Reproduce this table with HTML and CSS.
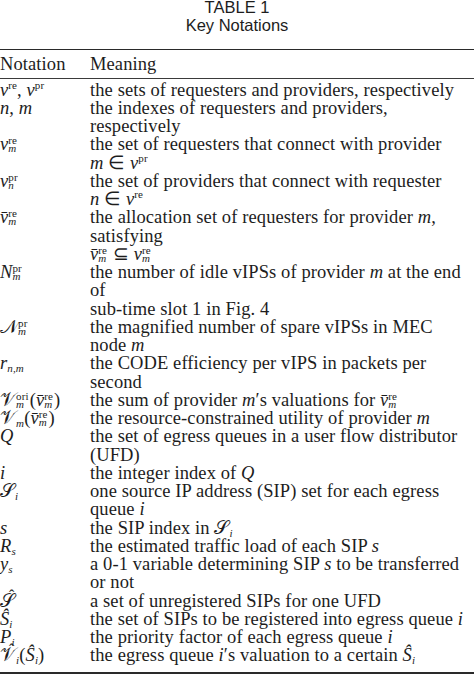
FILE: index.html
```html
<!DOCTYPE html>
<html>
<head>
<meta charset="utf-8">
<link rel="stylesheet" href="styles.css">
</head>
<body>
<div class="caption">
  <div>TABLE 1</div>
  <div>Key Notations</div>
</div>
<table class="notations">
  <thead>
    <tr><th class="cn">Notation</th><th class="cm">Meaning</th></tr>
  </thead>
  <tbody>
    <tr class="first"><td class="cn"><i>v</i><sup>re</sup>, <i>v</i><sup>pr</sup></td><td class="cm">the sets of requesters and providers, respectively</td></tr>
    <tr><td class="cn"><i>n</i>, <i>m</i></td><td class="cm">the indexes of requesters and providers,<br>respectively</td></tr>
    <tr><td class="cn"><i>v</i><span class="ss"><span>re</span><i>m</i></span></td><td class="cm">the set of requesters that connect with provider<br><i>m</i> ∈ <i>v</i><sup>pr</sup></td></tr>
    <tr><td class="cn"><i>v</i><span class="ss"><span>pr</span><i>n</i></span></td><td class="cm">the set of providers that connect with requester<br><i>n</i> ∈ <i>v</i><sup>re</sup></td></tr>
    <tr><td class="cn"><i>v̄</i><span class="ss"><span>re</span><i>m</i></span></td><td class="cm">the allocation set of requesters for provider <i>m</i>,<br>satisfying<br><i>v̄</i><span class="ss"><span>re</span><i>m</i></span> ⊆ <i>v</i><span class="ss"><span>re</span><i>m</i></span></td></tr>
    <tr><td class="cn"><i>N</i><span class="ss"><span>pr</span><i>m</i></span></td><td class="cm">the number of idle vIPSs of provider <i>m</i> at the end<br>of<br>sub-time slot 1 in Fig. 4</td></tr>
    <tr><td class="cn"><span class="cal">𝒩</span><span class="ss"><span>pr</span><i>m</i></span></td><td class="cm">the magnified number of spare vIPSs in MEC<br>node <i>m</i></td></tr>
    <tr><td class="cn"><i>r</i><sub><i>n</i>,<i>m</i></sub></td><td class="cm">the CODE efficiency per vIPS in packets per<br>second</td></tr>
    <tr><td class="cn"><span class="cal">𝒱</span><span class="ss"><span>ori</span><i>m</i></span>(<i>v̄</i><span class="ss"><span>re</span><i>m</i></span>)</td><td class="cm">the sum of provider <i>m</i>′s valuations for <i>v̄</i><span class="ss"><span>re</span><i>m</i></span></td></tr>
    <tr><td class="cn"><span class="cal">𝒱</span><sub><i>m</i></sub>(<i>v̄</i><span class="ss"><span>re</span><i>m</i></span>)</td><td class="cm">the resource-constrained utility of provider <i>m</i></td></tr>
    <tr><td class="cn"><i>Q</i></td><td class="cm">the set of egress queues in a user flow distributor<br>(UFD)</td></tr>
    <tr><td class="cn"><i>i</i></td><td class="cm">the integer index of <i>Q</i></td></tr>
    <tr><td class="cn"><span class="cal">𝒮</span><sub><i>i</i></sub></td><td class="cm">one source IP address (SIP) set for each egress<br>queue <i>i</i></td></tr>
    <tr><td class="cn"><i>s</i></td><td class="cm">the SIP index in <span class="cal">𝒮</span><sub><i>i</i></sub></td></tr>
    <tr><td class="cn"><i>R</i><sub><i>s</i></sub></td><td class="cm">the estimated traffic load of each SIP <i>s</i></td></tr>
    <tr><td class="cn"><i>y</i><sub><i>s</i></sub></td><td class="cm">a 0-1 variable determining SIP <i>s</i> to be transferred<br>or not</td></tr>
    <tr><td class="cn"><span class="cal hat">𝒮</span></td><td class="cm">a set of unregistered SIPs for one UFD</td></tr>
    <tr><td class="cn"><i>Ŝ</i><sub><i>i</i></sub></td><td class="cm">the set of SIPs to be registered into egress queue <i>i</i></td></tr>
    <tr><td class="cn"><i>P</i><sub><i>i</i></sub></td><td class="cm">the priority factor of each egress queue <i>i</i></td></tr>
    <tr class="last"><td class="cn"><span class="cal hat">𝒱</span><sub><i>i</i></sub>(<i>Ŝ</i><sub><i>i</i></sub>)</td><td class="cm">the egress queue <i>i</i>′s valuation to a certain <i>Ŝ</i><sub><i>i</i></sub></td></tr>
  </tbody>
</table>
</body>
</html>
```
FILE: styles.css
```css
html, body {
  margin: 0;
  padding: 0;
  background: #ffffff;
  color: #1d1d1d;
}

.caption {
  font-family: "Liberation Sans", Arial, sans-serif;
  font-size: 16.5px;
  line-height: 18.2px;
  text-align: center;
  margin-top: -2px;
}

.notations {
  width: 474px;
  margin-top: 15px;
  border-collapse: collapse;
  font-family: "Liberation Serif", "Times New Roman", serif;
  font-size: 18.5px;
  line-height: 18.25px;
  letter-spacing: 0.1px;
  border-top: 1.5px solid #2a2a2a;
  border-bottom: 2px solid #2a2a2a;
}

.notations th {
  font-weight: normal;
  text-align: left;
  padding: 5px 0 4px;
  border-bottom: 1px solid #3a3a3a;
}

.notations td {
  vertical-align: top;
  padding: 0;
  white-space: nowrap;
}

.notations tr.first td {
  padding-top: 2px;
}

.notations tr.last td {
  padding-bottom: 7px;
}

.cn {
  width: 90px;
  padding-left: 1px;
}

.cm {
  padding-left: 0;
}

i {
  font-style: italic;
}

sup, sub {
  font-size: 11px;
  line-height: 0;
  position: relative;
  vertical-align: baseline;
}

sup {
  top: -7px;
}

sub {
  top: 3px;
}

.ss {
  display: inline-flex;
  flex-direction: column;
  font-size: 11px;
  line-height: 8px;
  vertical-align: 6px;
  margin-right: 1px;
}

.cal {
  font-family: "DejaVu Serif", "DejaVu Sans", serif;
  font-style: normal;
}

.hat {
  position: relative;
  display: inline-block;
}

.hat::after {
  content: "ˆ";
  position: absolute;
  left: 9px;
  top: -5px;
  font-family: "Liberation Serif", serif;
  font-size: 16px;
}
```
